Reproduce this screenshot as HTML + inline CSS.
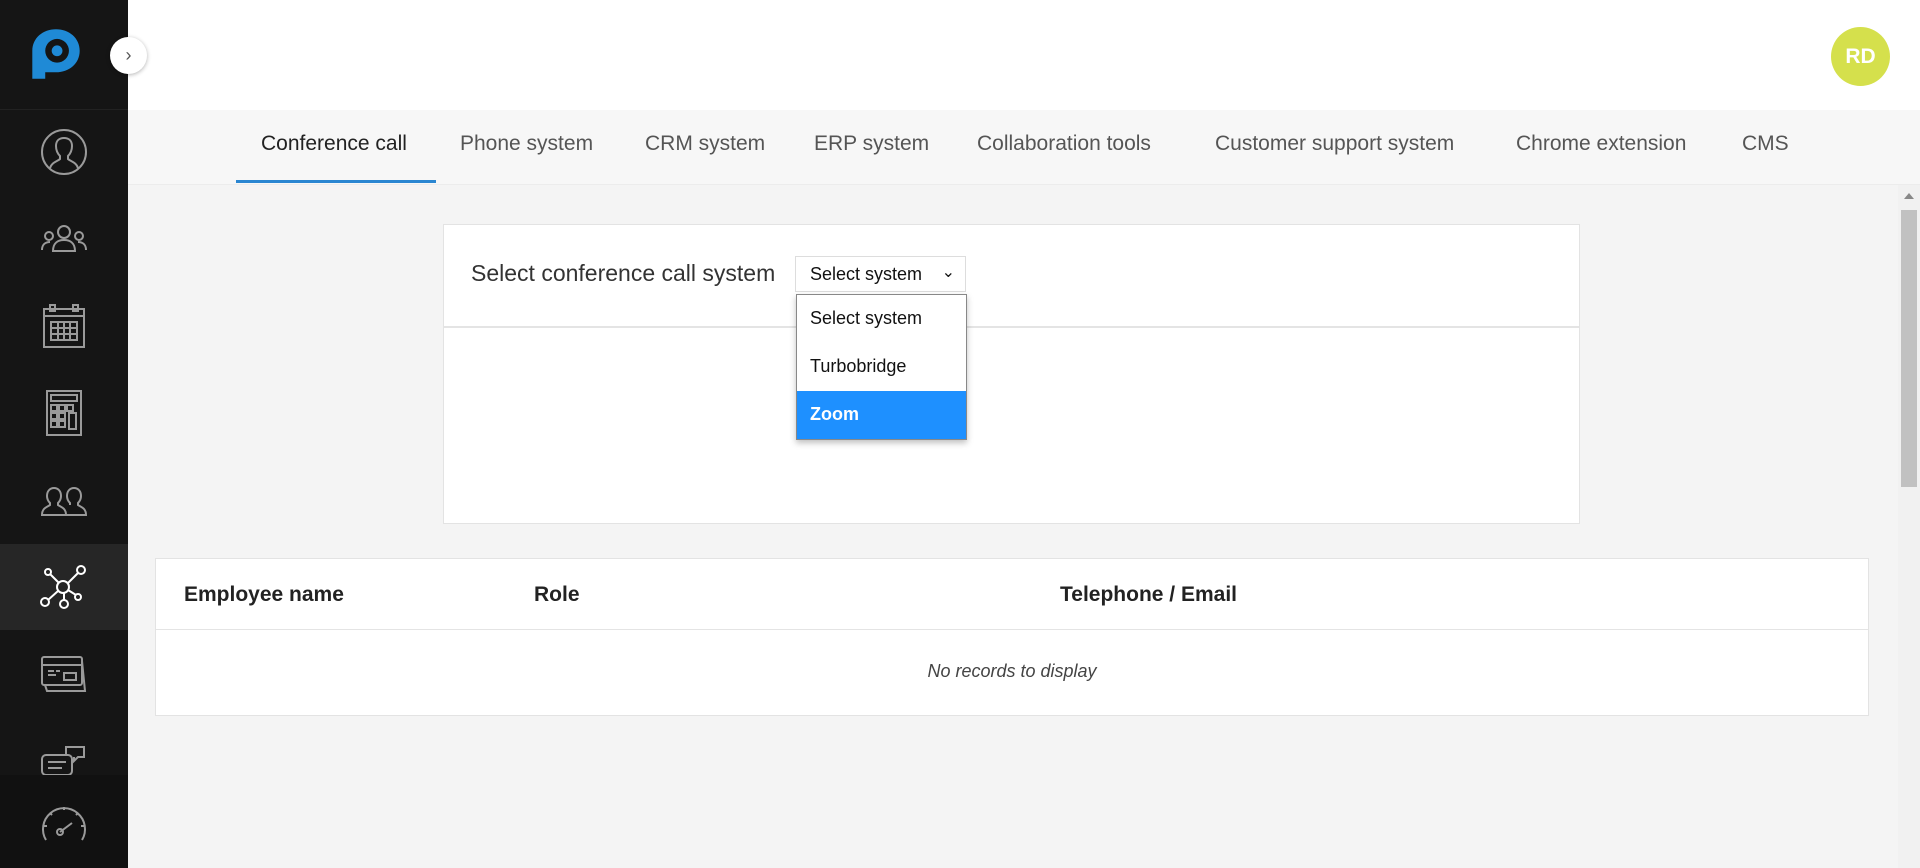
<!DOCTYPE html>
<html><head><meta charset="utf-8"><style>
*{box-sizing:border-box;margin:0;padding:0}
body{width:1920px;height:868px;overflow:hidden;background:#f4f4f4;font-family:"Liberation Sans",sans-serif;position:relative;color:#222}
.sb{position:absolute;left:0;top:0;width:128px;height:868px;background:#151515}
.sb .logo{height:110px;border-bottom:1px solid #222}
.item{position:absolute;left:0;width:128px;height:86px;display:flex;align-items:center;justify-content:center}
.item svg{stroke:#9a9a9a;fill:none;stroke-width:2}
.hdr{position:absolute;left:128px;top:0;width:1792px;height:110px;background:#fff;box-shadow:0 2px 4px rgba(0,0,0,.15)}
.tog{position:absolute;left:110px;top:37px;width:37px;height:37px;border-radius:50%;background:#fff;box-shadow:0 1px 4px rgba(0,0,0,.3);display:flex;align-items:center;justify-content:center;color:#555;font-size:18px;z-index:5}
.av{position:absolute;left:1831px;top:27px;width:59px;height:59px;border-radius:50%;background:#d5e04c;color:#fff;font-weight:bold;font-size:21px;display:flex;align-items:center;justify-content:center}
.tabs{position:absolute;left:128px;top:110px;width:1792px;height:75px;background:#f7f7f7;border-bottom:1px solid #ececec}
.tab{position:absolute;top:22px;font-size:21px;color:#555;white-space:nowrap}
.ul{position:absolute;left:108px;top:70px;width:200px;height:3px;background:#2a86d1}
.card{position:absolute;background:#fff;border:1px solid #e3e3e3}
.sel{position:absolute;left:795px;top:256px;width:171px;height:36px;border:1px solid #ddd;background:#fff;font-size:18px;padding:7px 14px;color:#111}
.dd{position:absolute;left:796px;top:294px;width:171px;height:146px;border:1px solid #888;background:#fff;box-shadow:0 3px 6px rgba(0,0,0,.25);font-size:18px;color:#111}
.dd div{height:48px;padding:13px 13px}
.scroll{position:absolute;left:1898px;top:185px;width:22px;height:683px;background:#f1f1f1}
</style></head><body>
<div class="hdr"></div>
<div class="sb"><div class="logo"></div>
<svg style="position:absolute;left:28px;top:27px" width="56" height="54" viewBox="0 0 52 50"><path d="M4 48V22C4 10 14 2 26 2s22 8 22 20-10 20-22 20H16v6z" fill="#1f8ad6"/><circle cx="27" cy="22" r="11" fill="#151515"/><circle cx="27" cy="22" r="5" fill="#1f8ad6"/><circle cx="37" cy="12" r="3" fill="#1f8ad6"/></svg>
<div class="item" style="top:109px"><svg width="48" height="48"><circle cx="24" cy="24" r="22"/><path d="M10 40c2-6 8-7 10-9v-3c-3-3-4-6-4-10 0-5 3-8 8-8s8 3 8 8c0 4-1 7-4 10v3c2 2 8 3 10 9"/></svg></div>
<div class="item" style="top:195px"><svg width="48" height="30"><circle cx="24" cy="9" r="6"/><path d="M13 28c0-8 5-11 11-11s11 3 11 11z"/><circle cx="9" cy="13" r="4"/><path d="M2 27c0-5 3-8 8-8"/><circle cx="39" cy="13" r="4"/><path d="M46 27c0-5-3-8-8-8"/></svg></div>
<div class="item" style="top:283px"><svg width="44" height="48" stroke-width="1.6"><rect x="2" y="7" width="40" height="38"/><rect x="8" y="3" width="5" height="6"/><rect x="31" y="3" width="5" height="6"/><path d="M2 14h40M9 20h26v18H9zM9 26h26M9 32h26M16 20v18M22 20v18M28 20v18"/></svg></div>
<div class="item" style="top:370px"><svg width="38" height="48" stroke-width="1.6"><rect x="2" y="2" width="34" height="44"/><rect x="6" y="6" width="26" height="6"/><path d="M6 16h6v6H6zM14 16h6v6h-6zM22 16h6v6h-6zM6 24h6v6H6zM14 24h6v6h-6zM6 32h6v6H6zM14 32h6v6h-6zM24 24h7v16h-7z"/></svg></div>
<div class="item" style="top:457px"><svg width="48" height="34"><path d="M2 32c0-7 5-8 8-10v-2c-2-2-3-4-3-7 0-5 3-8 7-8s7 3 7 8c0 3-1 5-3 7v2c3 2 8 3 8 10z"/><path d="M26 32h20c0-7-5-8-8-10v-2c2-2 3-4 3-7 0-5-3-8-7-8s-7 3-7 8c0 3 1 5 3 7v2"/></svg></div>
<div class="item" style="top:544px;background:#262626"><svg width="50" height="44" style="stroke:#fff"><circle cx="24" cy="22" r="6"/><circle cx="9" cy="7" r="3"/><circle cx="42" cy="5" r="4"/><circle cx="6" cy="37" r="4"/><circle cx="25" cy="39" r="4"/><circle cx="39" cy="32" r="3"/><path d="M11 9l9 9M39 8l-10 10M9 35l10-9M25 28v7M29 25l8 5"/></svg></div>
<div class="item" style="top:631px"><svg width="48" height="38" stroke-width="1.6"><rect x="2" y="2" width="40" height="28" rx="2"/><path d="M5 30l2 6h38l-3-30M2 10h40M8 16h6M16 16h4M8 20h8"/><rect x="24" y="18" width="12" height="7"/></svg></div>
<div class="item" style="top:716px;height:59px;overflow:hidden;align-items:flex-start;padding-top:27px"><svg width="48" height="40"><rect x="2" y="12" width="30" height="20" rx="4"/><path d="M8 19h18M8 25h14M26 12V4h18v10h-6l-4 4v-4"/></svg></div>
<div class="item" style="top:775px;height:93px;background:#111"><svg width="48" height="40"><path d="M6 38A21 21 0 1 1 42 38"/><path d="M24 5v3M10 11l2 2M38 11l-2 2M4 24h3M44 24h-3M20 30l12-9"/><circle cx="20" cy="30" r="3"/></svg></div>
</div>
<div class="tog">&#8250;</div>
<div class="av">RD</div>
<div class="tabs">
<div class="ul"></div>
<div class="tab" style="left:133px;color:#222">Conference call</div>
<div class="tab" style="left:332px">Phone system</div>
<div class="tab" style="left:517px">CRM system</div>
<div class="tab" style="left:686px">ERP system</div>
<div class="tab" style="left:849px">Collaboration tools</div>
<div class="tab" style="left:1087px">Customer support system</div>
<div class="tab" style="left:1388px">Chrome extension</div>
<div class="tab" style="left:1614px">CMS</div>
</div>
<div class="scroll"><div style="position:absolute;left:3px;top:25px;width:16px;height:277px;background:#c1c1c1"></div><div style="position:absolute;left:6px;top:8px;width:0;height:0;border-left:5px solid transparent;border-right:5px solid transparent;border-bottom:6px solid #888"></div></div>
<div class="card" style="left:443px;top:224px;width:1137px;height:300px">
<div style="position:absolute;left:0;top:101px;width:100%;height:2px;background:#e4e4e4"></div>
<div style="position:absolute;left:27px;top:35px;font-size:23px;color:#333">Select conference call system</div>
</div>
<div class="sel">Select system<span style="position:absolute;right:10px;top:5px;font-size:16px">&#8964;</span></div>
<div class="dd"><div>Select system</div><div>Turbobridge</div><div style="background:#1e90ff;color:#fff;font-weight:bold">Zoom</div></div>
<div class="card" style="left:155px;top:558px;width:1714px;height:158px">
<div style="position:absolute;left:0;top:70px;width:100%;height:1px;background:#e4e4e4"></div>
<div style="position:absolute;left:28px;top:24px;font-size:21px;font-weight:bold;color:#222">Employee name</div>
<div style="position:absolute;left:378px;top:24px;font-size:21px;font-weight:bold;color:#222">Role</div>
<div style="position:absolute;left:904px;top:24px;font-size:21px;font-weight:bold;color:#222">Telephone / Email</div>
<div style="position:absolute;left:0;width:100%;top:102px;text-align:center;font-size:18px;font-style:italic;color:#444">No records to display</div>
</div>
</body></html>
